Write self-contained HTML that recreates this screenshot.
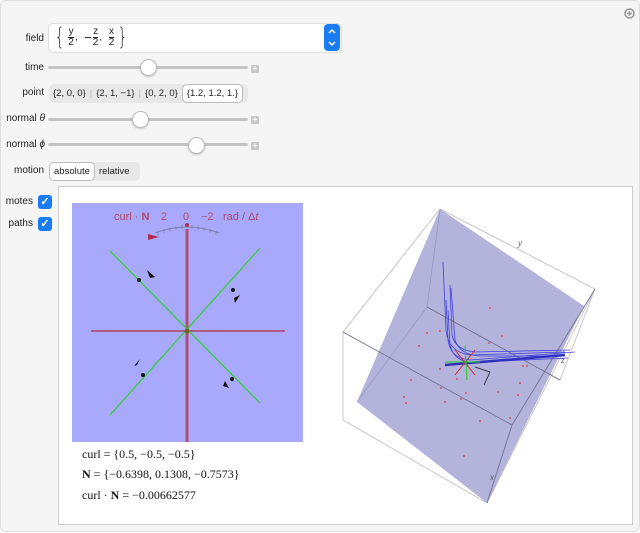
<!DOCTYPE html>
<html><head><meta charset="utf-8"><style>
*{box-sizing:border-box}
body{margin:0;width:640px;height:533px;background:#fff;font-family:"Liberation Sans",sans-serif;font-size:10px;color:#222;position:relative;overflow:hidden}
.panel{position:absolute;left:0;top:0;width:640px;height:532px;background:#f5f5f5;border:1px solid #ddd;border-radius:6px}
.lbl{position:absolute;text-align:right;width:44px;font-size:10px;color:#222}
.track{position:absolute;height:3px;background:#c4c4c4;border-radius:2px}
.knob{position:absolute;width:17px;height:17px;border-radius:50%;background:#fff;border:1px solid #bbb;box-shadow:0 1px 2px rgba(0,0,0,.2)}
.plus{position:absolute;width:8px;height:8px;background:#c8c8c8;border-radius:1px;color:#fff;font-size:8px;line-height:8px;text-align:center;font-weight:bold}
.seg{position:absolute;height:19px;background:#e8e8e8;border-radius:5px;display:flex;align-items:center;font-size:9.5px}
.seg span{padding:0 4px;white-space:nowrap}
.seg .on{background:#fff;border:1px solid #bbb;border-radius:5px;height:19px;line-height:17px}
.cb{position:absolute;width:14px;height:14px;background:#1a7cf5;border-radius:3px;color:#fff;font-size:11px;line-height:14px;text-align:center;font-weight:bold}
.out{position:absolute;left:58px;top:186px;width:575px;height:339px;background:#fff;border:1px solid #ccc}
.tx{position:absolute;font-family:"Liberation Serif",serif;font-size:12px;color:#111}
.fr{display:inline-flex;flex-direction:column;align-items:center;line-height:10px;font-size:10px}
.fr span+span{border-top:1px solid #222}
.br{font-size:24px;font-weight:100;line-height:24px;font-family:"DejaVu Sans",sans-serif;transform:scaleX(.6);display:inline-block}
</style></head><body>
<div class="panel"></div>
<svg style="position:absolute;left:624px;top:8px" width="11" height="11"><circle cx="5.5" cy="5.5" r="4.5" fill="none" stroke="#999" stroke-width="1.6"/><path d="M5.5 3v5M3 5.5h5" stroke="#999" stroke-width="1.4"/></svg>

<div class="lbl" style="left:0;top:33px">field</div>
<div style="position:absolute;left:48px;top:23px;width:294px;height:30px;background:#fff;border:1px solid #ddd;border-radius:5px"></div>
<div style="position:absolute;left:52px;top:25px;display:flex;align-items:center;gap:1px">
<span class="br">{</span>
<span class="fr"><span>y</span><span>2</span></span>,&nbsp;&nbsp;<span style="font-size:13px">−</span>
<span class="fr"><span>z</span><span>2</span></span>,&nbsp;&nbsp;
<span class="fr"><span>x</span><span>2</span></span>
<span class="br">}</span></div>
<div style="position:absolute;left:324px;top:24px;width:16px;height:27px;background:#1a7cf5;border-radius:4px"><svg width="16" height="27"><path d="M5 9l3-3 3 3M5 18l3 3 3-3" stroke="#fff" stroke-width="1.5" fill="none"/></svg></div>

<div class="lbl" style="left:0;top:62px">time</div>
<div class="track" style="left:48px;top:66px;width:200px"></div>
<div class="knob" style="left:140px;top:59px"></div>
<div class="plus" style="left:251px;top:65px">+</div>

<div class="lbl" style="left:0;top:87px">point</div>
<div class="seg" style="left:49px;top:84px;width:199px"><span>{2, 0, 0}</span><span style="color:#bbb;padding:0">|</span><span>{2, 1, −1}</span><span style="color:#bbb;padding:0">|</span><span>{0, 2, 0}</span><span class="on">{1.2, 1.2, 1.}</span></div>

<div class="lbl" style="left:1px;top:113px">normal <i>θ</i></div>
<div class="track" style="left:48px;top:118px;width:200px"></div>
<div class="knob" style="left:132px;top:111px"></div>
<div class="plus" style="left:251px;top:116px">+</div>

<div class="lbl" style="left:1px;top:139px">normal <i>ϕ</i></div>
<div class="track" style="left:48px;top:143px;width:200px"></div>
<div class="knob" style="left:188px;top:137px"></div>
<div class="plus" style="left:251px;top:142px">+</div>

<div class="lbl" style="left:0;top:165px">motion</div>
<div class="seg" style="left:49px;top:162px;width:91px"><span class="on">absolute</span><span>relative</span></div>

<div class="lbl" style="left:-11px;top:196px">motes</div>
<div class="cb" style="left:38px;top:195px">✓</div>
<div class="lbl" style="left:-11px;top:218px">paths</div>
<div class="cb" style="left:38px;top:217px">✓</div>

<div class="out"></div>
<svg style="position:absolute;left:72px;top:203px" width="231" height="239">
<rect width="231" height="239" fill="#a8a8fc"/>
<text x="42" y="17" font-family="Liberation Sans" font-size="11" fill="#b04a6a">curl · <tspan font-weight="bold">N</tspan></text>
<text x="89" y="17" font-family="Liberation Sans" font-size="11" fill="#b04a6a">2</text>
<text x="111" y="17" font-family="Liberation Sans" font-size="11" fill="#b04a6a">0</text>
<text x="129" y="17" font-family="Liberation Sans" font-size="11" fill="#b04a6a">−2</text>
<text x="151" y="17" font-family="Liberation Sans" font-size="11" fill="#b04a6a">rad / Δ<tspan font-style="italic">t</tspan></text>
<path d="M83 30 Q115 18 147 30" fill="none" stroke="#8080a8" stroke-width="1"/>
<g stroke="#8080a8" stroke-width=".8"><path d="M86 28v4M92 26v4M98 24v4M104 23v4M110 22v4M120 22v4M126 23v4M132 24v4M138 26v4M144 28v4"/></g>
<circle cx="115" cy="22" r="2" fill="#b03050"/>
<path d="M115 26v216" stroke="#b05070" stroke-width="3"/>
<path d="M76 31l11 3-11 3z" fill="#b03050"/>
<path d="M19 128h194" stroke="#b04060" stroke-width="1.5"/>
<path d="M38 48L188 200M188 45L38 212" stroke="#30d030" stroke-width="1.2"/>
<circle cx="115" cy="128" r="2.5" fill="#706020"/>
<g fill="#111"><circle cx="67" cy="77" r="2"/><circle cx="161" cy="87" r="2"/><circle cx="71" cy="172" r="2"/><circle cx="160" cy="176" r="2"/>
<path d="M75 67l8 7-5 1z"/><path d="M168 92l-5 8-1-5z"/><path d="M68 156l-6 7 3-1z"/><path d="M153 178l4 7-6-2z"/></g>
</svg>
<div class="tx" style="left:82px;top:447px">curl = {0.5, −0.5, −0.5}</div>
<div class="tx" style="left:82px;top:467px"><b>N</b> = {−0.6398, 0.1308, −0.7573}</div>
<div class="tx" style="left:82px;top:488px">curl · <b>N</b> = −0.00662577</div>

<svg style="position:absolute;left:0;top:0" width="640" height="533">
<g fill="none" stroke="#bbb" stroke-width=".8">
<path d="M440 209L595 289L487 503L343 420L343 332Z"/>
<path d="M427 307L440 209M427 307L560 380M427 307L357 402M343 332L512 425L487 503M512 425L595 289M560 380L595 289"/>
</g>
<path d="M440 209L584 306L487 503L357 402Z" fill="#8080c4" fill-opacity=".6"/>
<g fill="none" stroke="#707090" stroke-width=".8"><path d="M427 307L560 380M343 332L512 425L487 503M512 425L595 289"/></g>
<text x="518" y="246" font-size="9" font-style="italic" fill="#555" font-family="Liberation Serif">y</text>
<text x="561" y="363" font-size="9" font-style="italic" fill="#555" font-family="Liberation Serif">z</text>
<text x="490" y="480" font-size="9" font-style="italic" fill="#555" font-family="Liberation Serif">x</text>
<g fill="none" stroke="#4040e0" stroke-width=".8">
<path d="M443 262L446 330Q448 352 470 355L565 352"/>
<path d="M450 285L452 335Q455 350 475 352L570 350"/>
<path d="M451 288L455 340Q460 355 480 356L565 356"/>
<path d="M446 300L448 340Q450 358 470 360L575 352"/>
<path d="M448 310L450 345Q455 365 480 362L568 358"/>
</g>
<path d="M445 365L565 355" stroke="#3030c0" stroke-width="2.5"/>
<g stroke="#e02020" stroke-width="1"><path d="M455 350L475 375M475 350L455 375M452 362h26"/></g>
<g stroke="#20d020" stroke-width="1"><path d="M465 345L467 380M445 362h35"/></g>
<path d="M475 367L490 372L484 385" stroke="#222" fill="none" stroke-width=".8"/>
<g fill="#e05060"><circle cx="490" cy="308" r="1"/><circle cx="427" cy="333" r="1"/><circle cx="440" cy="331" r="1"/><circle cx="502" cy="336" r="1"/><circle cx="419" cy="346" r="1"/><circle cx="489" cy="343" r="1"/><circle cx="440" cy="369" r="1"/><circle cx="457" cy="379" r="1"/><circle cx="411" cy="380" r="1"/><circle cx="441" cy="388" r="1"/><circle cx="466" cy="393" r="1"/><circle cx="498" cy="392" r="1"/><circle cx="520" cy="383" r="1"/><circle cx="404" cy="397" r="1"/><circle cx="406" cy="403" r="1"/><circle cx="445" cy="402" r="1"/><circle cx="461" cy="399" r="1"/><circle cx="518" cy="395" r="1"/><circle cx="510" cy="418" r="1"/><circle cx="480" cy="421" r="1"/><circle cx="464" cy="456" r="1"/><circle cx="527" cy="366" r="1"/><circle cx="523" cy="366" r="1"/></g>
</svg>
</body></html>
